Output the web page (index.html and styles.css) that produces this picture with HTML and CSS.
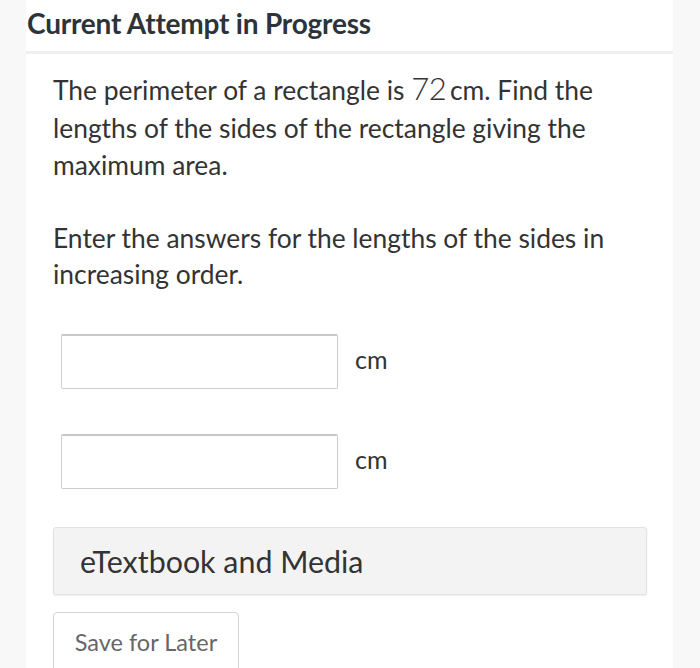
FILE: index.html
```html
<!DOCTYPE html>
<html>
<head>
<meta charset="utf-8">
<link rel="stylesheet" href="styles.css">
</head>
<body>
<div class="panel">
  <div class="header">
    <h1 class="title">Current Attempt in Progress</h1>
  </div>
  <div class="content">
    <p class="para">The perimeter of a rectangle is <span class="math">72</span> cm. Find the lengths of the sides of the rectangle giving the maximum area.</p>
    <p class="para para2">Enter the answers for the lengths of the sides in increasing order.</p>
    <div class="answer">
      <input class="field" type="text">
      <span class="unit">cm</span>
    </div>
    <div class="answer">
      <input class="field" type="text">
      <span class="unit">cm</span>
    </div>
    <div class="media">eTextbook and Media</div>
    <button class="save">Save for Later</button>
  </div>
</div>
</body>
</html>
```
FILE: styles.css
```css
html, body {
  margin: 0;
  padding: 0;
}
body {
  background: #f8f8f8;
  font-family: Lato, "Open Sans", sans-serif;
  color: #333;
  height: 668px;
  overflow: hidden;
}
.panel {
  margin-left: 26px;
  width: 647px;
  background: #fff;
  min-height: 668px;
}
.header {
  height: 51px;
  border-bottom: 3px solid #efefef;
  display: flex;
  align-items: center;
}
.title {
  margin: -6px 0 0 1px;
  font-size: 28px;
  font-weight: 700;
  color: #2d3339;
  letter-spacing: -0.2px;
}
.content {
  padding: 18px 0 0 27px;
}
.para {
  margin: 0;
  font-size: 26.4px;
  line-height: 37.5px;
  color: #333;
  width: 590px;
}
.para2 {
  margin-top: 35px;
  line-height: 36px;
}
.math {
  font-family: Lato, sans-serif;
  font-weight: 300;
  font-size: 31px;
  line-height: 20px;
  letter-spacing: -0.5px;
  margin-right: -3px;
}
.answer {
  display: flex;
  align-items: center;
  margin-left: 8px;
  margin-top: 42px;
}
.answer + .answer {
  margin-top: 45px;
}
.field {
  box-sizing: border-box;
  width: 277px;
  height: 55px;
  border: 1px solid #ccc;
  border-top: 2px solid #c8c8c8;
  border-radius: 2px;
  margin: 0;
  padding: 0;
  background: #fff;
}
.unit {
  margin-left: 17px;
  font-size: 25px;
  color: #333;
  margin-top: -4px;
}
.media {
  box-sizing: border-box;
  margin-top: 38px;
  width: 594px;
  height: 68px;
  background: #f3f3f3;
  border: 1px solid #e2e2e2;
  border-radius: 3px;
  box-shadow: 0 1px 2px rgba(0,0,0,0.08);
  padding-left: 26px;
  display: flex;
  align-items: center;
  font-size: 30.4px;
  color: #333;
}
.save {
  display: block;
  box-sizing: border-box;
  margin-top: 17px;
  width: 186px;
  height: 64px;
  background: #fff;
  border: 1px solid #d5d5d5;
  border-radius: 4px;
  font-family: Lato, sans-serif;
  font-size: 23.5px;
  color: #666;
  padding: 0 0 4px 0;
}
```
